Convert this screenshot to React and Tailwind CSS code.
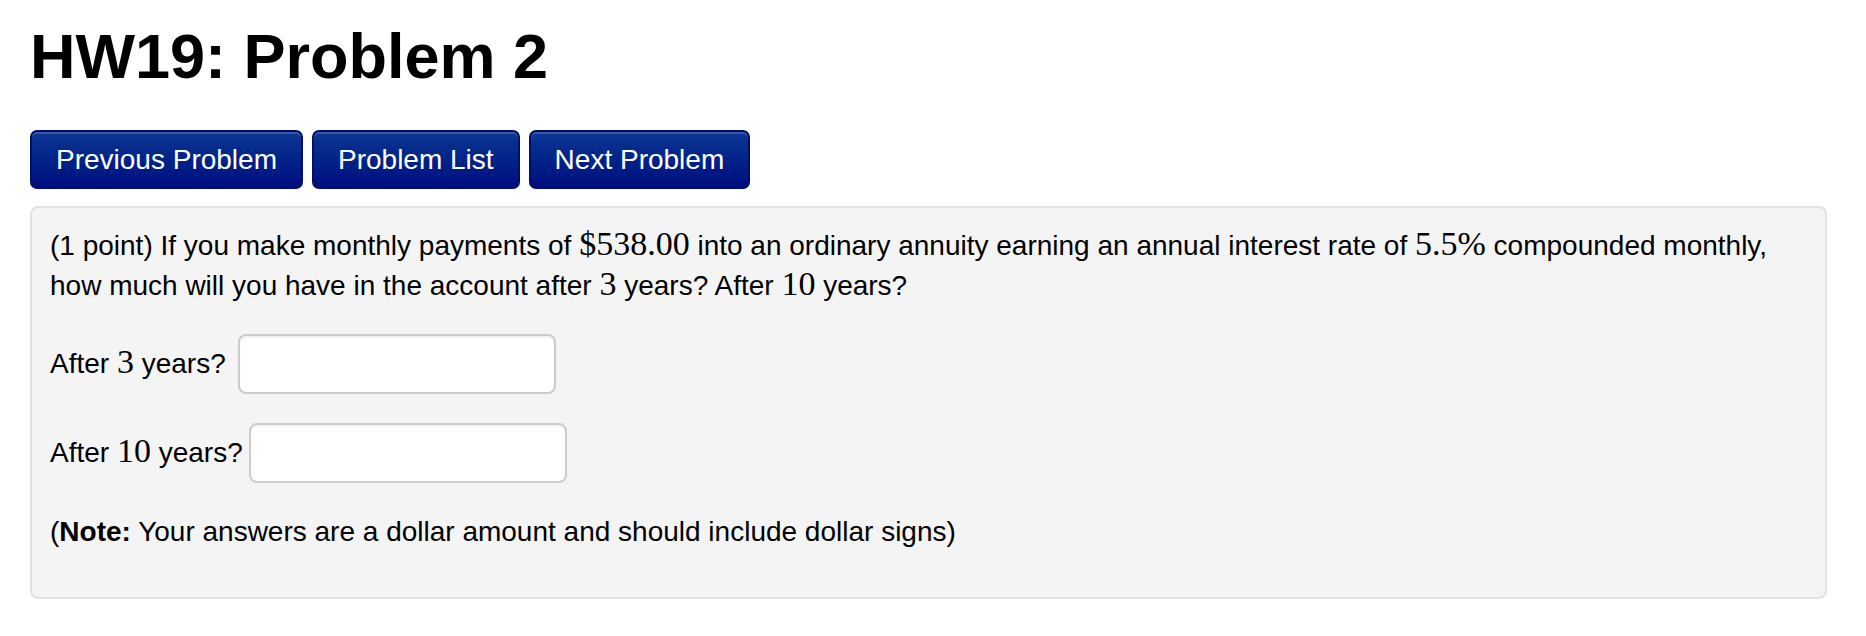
import React from 'react';

const sans = { fontFamily: '"Liberation Sans", Arial, Helvetica, sans-serif' };

function M({ children }) {
  return (
    <span className="text-[34px] leading-none" style={{ fontFamily: '"Liberation Serif", "Times New Roman", serif' }}>
      {children}
    </span>
  );
}

function NavButton({ label }) {
  return (
    <button
      type="button"
      className="h-[59px] px-[24px] rounded-[7px] border-2 border-[#00106a] bg-gradient-to-b from-[#0d3592] to-[#000a7f] text-white text-[28px] leading-none shadow-[inset_0_2px_0_rgba(255,255,255,0.18)]"
    >
      {label}
    </button>
  );
}

function AnswerRow({ years, className }) {
  return (
    <div className={`flex items-center ${className}`}>
      <span>
        After <M>{years}</M> years?
      </span>
      <input
        type="text"
        className="w-[318px] h-[60px] rounded-[8px] border-2 border-[#cccccc] bg-white shadow-[inset_0_2px_2px_rgba(0,0,0,0.06)] outline-none"
      />
    </div>
  );
}

export default function App() {
  return (
    <div className="bg-white min-h-[636px] px-[30px] pr-[39px] text-black" style={sans}>
      <h1 className="pt-[25px] text-[63px] font-bold leading-none">HW19: Problem 2</h1>

      <div className="flex gap-[9px] mt-[42px]">
        <NavButton label="Previous Problem" />
        <NavButton label="Problem List" />
        <NavButton label="Next Problem" />
      </div>

      <div className="mt-[17px] bg-[#f4f4f4] border-2 border-[#e2e2e2] rounded-[8px] pl-[18px] pr-[18px] pt-[18px] pb-[45px] text-[28px] leading-[40px]">
        <p>
          (1 point) If you make monthly payments of <M>$538.00</M> into an ordinary annuity earning an annual interest
          rate of <M>5.5%</M> compounded monthly, how much will you have in the account after <M>3</M> years? After{' '}
          <M>10</M> years?
        </p>

        <AnswerRow years="3" className="mt-[28px] gap-[12px]" />
        <AnswerRow years="10" className="mt-[29px] gap-[6px]" />

        <p className="mt-[29px]">
          (<b>Note:</b> Your answers are a dollar amount and should include dollar signs)
        </p>
      </div>
    </div>
  );
}
